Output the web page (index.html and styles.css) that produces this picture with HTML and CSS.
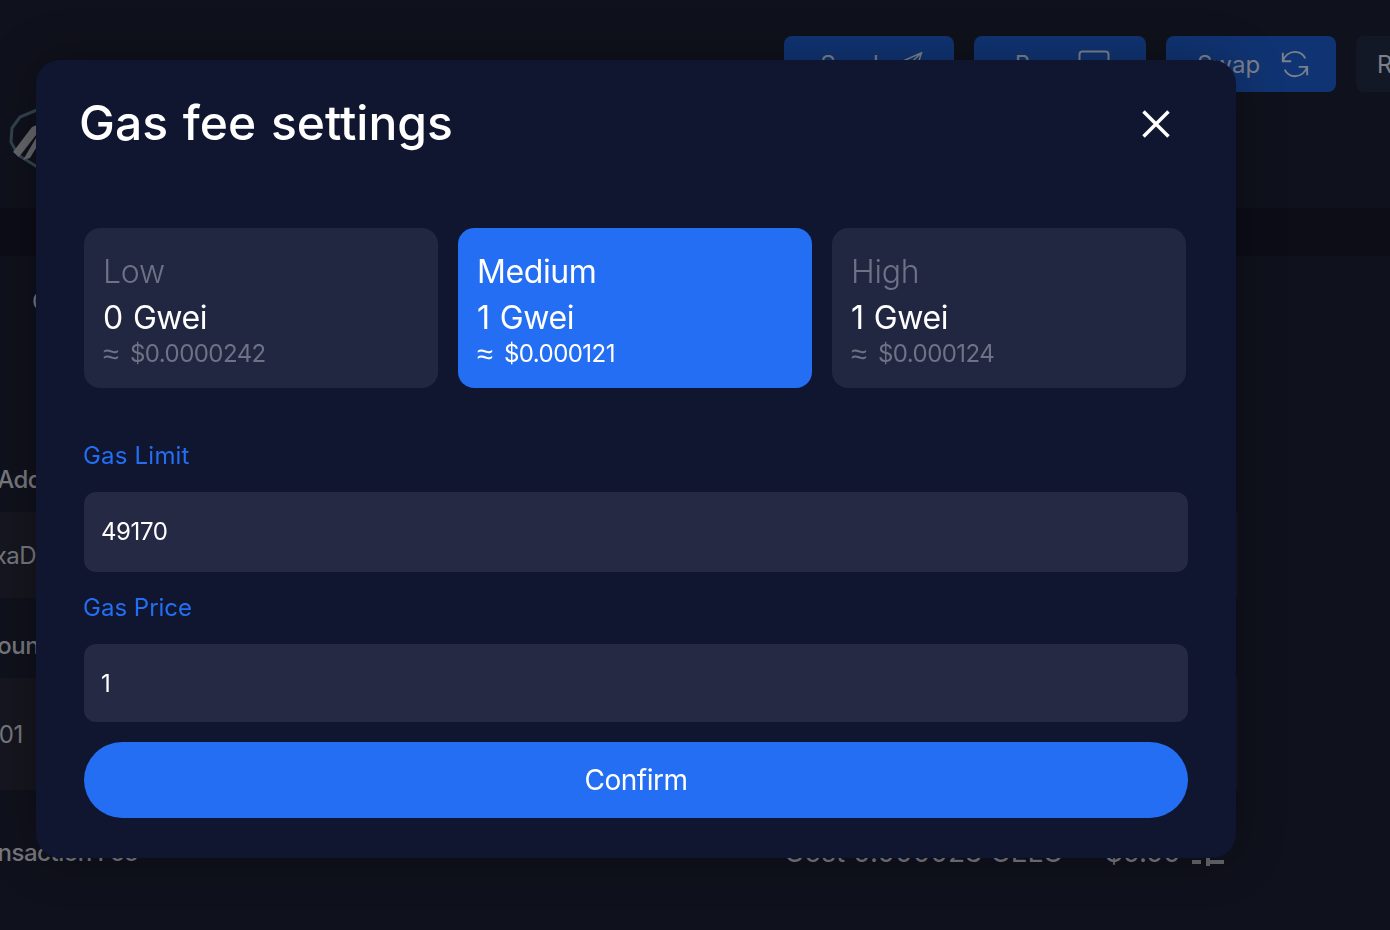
FILE: index.html
```html
<!DOCTYPE html>
<html lang="en">
<head>
<meta charset="utf-8">
<title>Gas fee settings</title>
<link rel="stylesheet" href="styles.css">
</head>
<body>
<main class="page">
  <div class="actions">
    <button class="action">Send
      <svg class="action-icon action-icon-send" viewBox="0 0 32 32"><path d="M1 14 30 1 22 26 12 18 30 1M12 18v9l4-5"/></svg>
    </button>
    <button class="action action-buy">Buy
      <svg class="action-icon action-icon-buy" viewBox="0 0 32 32"><rect x="1.500" y="1.500" width="29" height="24" rx="3"/><path d="M2 14h28"/></svg>
    </button>
    <button class="action">Swap
      <svg class="action-icon" viewBox="0 0 32 32"><path d="M3 13C5 7 10 3 16 3c5 0 9 3 11 7M3 4v9h9M29 19c-2 6-7 10-13 10-5 0-9-3-11-7M29 28v-9h-9"/></svg>
    </button>
    <button class="action action-dark">Receive</button>
  </div>
  <div class="brand">
    <svg class="logo" viewBox="0 0 60 80">
      <path class="logo-ring" d="M44 12 20 22 12 33 11 47 18 60 44 76"/>
      <path class="logo-slash" d="M13 57 32 32 44 27 44 36 36 40 19 62Z"/>
      <path class="logo-slash" d="M23 65 36 43 44 40 44 50 36 53 30 63Z"/>
    </svg>
  </div>
  <div class="band"></div>
  <h2 class="section-title">Confirm</h2>
  <div class="field-label field-address">To Address</div>
  <div class="field-row field-row-address">0xaD3f19c2B7</div>
  <div class="field-label field-amount">Amount</div>
  <div class="field-row field-row-amount">0.01</div>
  <div class="fee-row">
    <span class="fee-label">Transaction Fee</span>
    <span class="fee-cost">Cost 0.000023 CELO</span>
    <span class="fee-usd">$0.00</span>
    <svg class="fee-icon" viewBox="0 0 32 22"><path d="M0 16h9v4H0zM14 0h4v16h14v4H18v2h-4z"/></svg>
  </div>
</main>

<section class="modal">
  <header class="modal-head">
    <h1 class="modal-title">Gas fee settings</h1>
    <svg class="close" viewBox="0 0 28 28"><path d="M1.500 1.500 26.500 26.500M26.500 1.500 1.500 26.500"/></svg>
  </header>
  <div class="tiers">
    <div class="tier">
      <div class="tier-name">Low</div>
      <div class="tier-gwei">0 Gwei</div>
      <div class="tier-usd"><span class="approx">≈</span>$0.0000242</div>
    </div>
    <div class="tier tier-active">
      <div class="tier-name">Medium</div>
      <div class="tier-gwei">1 Gwei</div>
      <div class="tier-usd"><span class="approx">≈</span>$0.000121</div>
    </div>
    <div class="tier">
      <div class="tier-name">High</div>
      <div class="tier-gwei">1 Gwei</div>
      <div class="tier-usd"><span class="approx">≈</span>$0.000124</div>
    </div>
  </div>
  <label class="input-label label-limit">Gas Limit</label>
  <div class="input input-limit">49170</div>
  <label class="input-label label-price">Gas Price</label>
  <div class="input input-price">1</div>
  <button class="confirm">Confirm</button>
</section>
</body>
</html>
```
FILE: styles.css
```css
* { box-sizing: border-box; }
html, body { margin: 0; height: 100%; overflow: hidden; }
body {
  background: #0f111c;
  font-family: Inter, "Liberation Sans", "Noto Sans CJK SC", sans-serif;
  color: #fff;
}
button { font: inherit; border: 0; }

.page { width: 1700px; margin-left: -36px; padding-top: 36px; color: #77787e; font-size: 24px; letter-spacing: -.5px; }
.actions { display: flex; gap: 20px; padding-left: 820px; height: 56px; }
.action {
  width: 170px; height: 56px; border-radius: 8px; background: #103473; color: #7b818c; padding: 0 0 0 5px;
  display: flex; align-items: center; justify-content: center; gap: 20px; font-size: 24px; letter-spacing: 0;
}
.action-buy { width: 172px; }
.action-dark { background: #131827; width: 180px; justify-content: flex-start; padding-left: 21px; }
.action-icon { width: 30px; height: 30px; fill: none; stroke: #7b818c; stroke-width: 2; }
.action-icon-send { width: 24px; height: 24px; }
.action-icon-buy { width: 32px; height: 32px; margin-top: 4px; }
.brand { height: 116px; padding: 3px 0 0 36px; }
.logo { display: block; width: 60px; height: 80px; }
.logo-ring { fill: none; stroke: #33434e; stroke-width: 3; }
.logo-slash { fill: #66676b; }
.band { height: 48px; background: #0c0d16; }
.section-title { margin: 0; height: 92px; padding: 30px 0 0 68px; font-size: 24px; font-weight: 400; line-height: 32px; }
.field-label { font-weight: 500; line-height: 32px; }
.field-address { margin-top: 116px; margin-bottom: 16px; }
.field-row { width: 1274px; background: #15161f; padding-left: 15px; display: flex; align-items: center; }
.field-row-address { height: 86px; }
.field-amount { margin-top: 32px; margin-bottom: 16px; margin-left: -4px; }
.field-row-amount { height: 112px; }
.fee-row { display: flex; align-items: center; height: 32px; margin-top: 46px; font-weight: 500; }
.fee-label { margin-left: -2px; flex: 0 0 822px; }
.fee-cost { width: 321px; font-size: 28px; font-weight: 400; letter-spacing: 0; }
.fee-usd { width: 87px; font-size: 28px; font-weight: 400; }
.fee-icon { width: 32px; height: 22px; fill: #66676b; align-self: flex-end; margin-bottom: 2px; }

.modal {
  position: fixed; left: 36px; top: 60px; width: 1200px; height: 798px;
  background: #101530; border-radius: 24px; padding: 0 48px;
  box-shadow: 0 0 50px rgba(0, 0, 0, .3);
}
.modal-head { display: flex; align-items: center; justify-content: space-between; height: 128px; margin-left: -5px; padding-right: 18px; }
.modal-title { margin: -2px 0 0; font-size: 48px; line-height: 64px; font-weight: 500; word-spacing: 2px; }
.close { width: 28px; height: 28px; fill: none; stroke: #fff; stroke-width: 3.500; }
.tiers { display: flex; gap: 20px; margin-top: 40px; width: 1102px; }
.tier {
  flex: 0 0 354px; height: 160px; background: #212641; border-radius: 16px;
  padding: 21px 19px 0; font-size: 32px; line-height: 46px; letter-spacing: -.4px;
}
.tier-active { background: #236ef2; }
.tier-name { color: #6e7285; font-weight: 300; letter-spacing: -.2px; }
.tier-active .tier-name { color: #fff; font-weight: 400; letter-spacing: -.4px; }
.tier-gwei { color: #fff; word-spacing: 1.500px; }
.tier-usd { font-size: 24px; line-height: 26px; color: #6e7285; letter-spacing: -.55px; display: flex; }
.tier-active .tier-usd { color: #fff; }
.approx { width: 27px; font-family: "Liberation Sans", sans-serif; font-size: 29px; }
.input-label { display: block; color: #236ef2; font-size: 24px; line-height: 32px; margin-left: -1px; }
.label-limit { margin-top: 52px; margin-bottom: 20px; letter-spacing: .2px; }
.label-price { margin-top: 20px; margin-bottom: 20px; }
.input { width: 1104px; background: #252944; border-radius: 12px; padding: 0 0 2px 17px; display: flex; align-items: center; font-size: 24px; letter-spacing: -.4px; }
.input-limit { height: 80px; }
.input-price { height: 78px; padding-bottom: 0; }
.confirm {
  display: block; width: 1104px; height: 76px; margin-top: 20px; border-radius: 38px;
  background: #236ef2; color: #fff; font-size: 28px; letter-spacing: -.5px;
}
```
